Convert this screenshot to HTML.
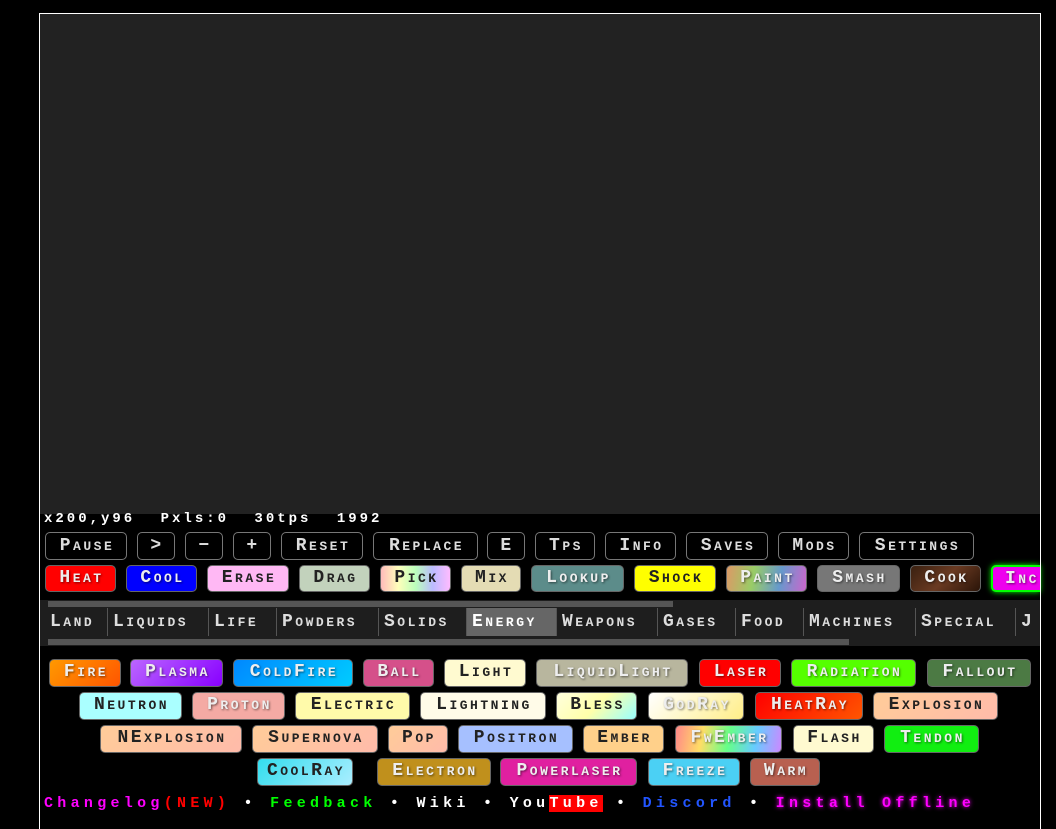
<!DOCTYPE html><html><head><style>
body{margin:0;background:#000;width:1056px;height:822px;overflow:hidden;position:relative;font-family:"Liberation Mono",monospace;}
#frame{position:absolute;left:39px;top:13px;width:1000px;height:815px;border:1px solid #fff;border-bottom:none;z-index:5}
#cv{position:absolute;left:40px;top:14px;width:1000px;height:500px;background:#222}
.b{position:absolute;height:26px;box-sizing:border-box;border:1px solid #666;border-radius:5px;font-weight:bold;font-variant:small-caps;font-size:18px;line-height:24px;text-align:center;color:#ddd;white-space:nowrap;overflow:hidden;letter-spacing:2.5px;text-indent:2px}
.c{background:#000;border-color:#777;height:28px;line-height:26px}
.e{color:#eee;text-shadow:1px 1px 2px #0008}
.d{color:#222;text-shadow:none}
.t{position:absolute;top:608px;height:28px;line-height:28px;font-weight:bold;font-variant:small-caps;font-size:18px;color:#ddd;text-align:left;padding-left:5px;letter-spacing:2.5px;border-right:1px solid #555;box-sizing:border-box;white-space:nowrap;overflow:hidden}
.sb{position:absolute;left:40px;width:1000px;height:8px;background:#1e1e1e}
.th{position:absolute;top:1px;height:6px;background:#555}
#stat{position:absolute;left:44px;top:511px;color:#fff;font-weight:bold;font-size:14px;letter-spacing:3px;word-spacing:14px}
#foot{position:absolute;left:44px;top:795px;font-weight:bold;font-size:15px;white-space:pre;color:#fff;letter-spacing:4.3px}
</style></head><body>
<div id="frame"></div><div id="cv"></div>
<div id="stat">x200,y96 Pxls:0 30tps 1992</div>
<div class="b c" style="left:45px;top:532px;width:82px">Pause</div>
<div class="b c" style="left:137px;top:532px;width:38px">&gt;</div>
<div class="b c" style="left:185px;top:532px;width:38px">−</div>
<div class="b c" style="left:233px;top:532px;width:38px">+</div>
<div class="b c" style="left:281px;top:532px;width:82px">Reset</div>
<div class="b c" style="left:373px;top:532px;width:105px">Replace</div>
<div class="b c" style="left:487px;top:532px;width:38px">E</div>
<div class="b c" style="left:535px;top:532px;width:60px">Tps</div>
<div class="b c" style="left:605px;top:532px;width:71px">Info</div>
<div class="b c" style="left:686px;top:532px;width:82px">Saves</div>
<div class="b c" style="left:778px;top:532px;width:71px">Mods</div>
<div class="b c" style="left:859px;top:532px;width:115px">Settings</div>

<div class="b e" style="left:45px;top:565px;width:71px;height:27px;background:#f00">Heat</div>
<div class="b e" style="left:126px;top:565px;width:71px;height:27px;background:#00f">Cool</div>
<div class="b d" style="left:207px;top:565px;width:82px;height:27px;background:#ffb8f4">Erase</div>
<div class="b d" style="left:299px;top:565px;width:71px;height:27px;background:#c2d2bc">Drag</div>
<div class="b d" style="left:380px;top:565px;width:71px;height:27px;background:linear-gradient(90deg,#fbb,#ffb,#bfb,#bbf,#fbf)">Pick</div>
<div class="b d" style="left:461px;top:565px;width:60px;height:27px;background:#e4dcb4">Mix</div>
<div class="b e" style="left:531px;top:565px;width:93px;height:27px;background:#5c8c8a">Lookup</div>
<div class="b d" style="left:634px;top:565px;width:82px;height:27px;background:#ff0">Shock</div>
<div class="b e" style="left:726px;top:565px;width:81px;height:27px;background:linear-gradient(100deg,#d96,#9c6,#69c,#c6c)">Paint</div>
<div class="b e" style="left:817px;top:565px;width:83px;height:27px;background:#777">Smash</div>
<div class="b e" style="left:910px;top:565px;width:71px;height:27px;background:linear-gradient(135deg,#3a2010,#6a3a22,#2a1408)">Cook</div>
<div class="b e" style="left:991px;top:565px;width:49px;height:27px;background:#e0e;border:2px solid #0f0;border-right:none;border-radius:5px 0 0 5px;box-shadow:0 0 6px #0f0;text-align:left;padding-left:10px">Inc</div>

<div class="sb" style="top:600px"><div class="th" style="left:8px;width:625px"></div></div>
<div style="position:absolute;left:40px;top:608px;width:1000px;height:30px;background:#1e1e1e"></div>
<div class="t" style="left:45px;width:63px">Land</div>
<div class="t" style="left:108px;width:101px">Liquids</div>
<div class="t" style="left:209px;width:68px">Life</div>
<div class="t" style="left:277px;width:102px">Powders</div>
<div class="t" style="left:379px;width:88px">Solids</div>
<div class="t" style="left:467px;width:90px;background:#666;color:#fff">Energy</div>
<div class="t" style="left:557px;width:101px">Weapons</div>
<div class="t" style="left:658px;width:78px">Gases</div>
<div class="t" style="left:736px;width:68px">Food</div>
<div class="t" style="left:804px;width:112px">Machines</div>
<div class="t" style="left:916px;width:100px">Special</div>
<div class="t" style="left:1016px;width:24px;border:none">J</div>
<div class="sb" style="top:638px"><div class="th" style="left:8px;width:801px"></div></div>

<div class="b e" style="left:49px;top:659px;width:72px;height:28px;background:linear-gradient(135deg,#f90,#f50)">Fire</div>
<div class="b e" style="left:130px;top:659px;width:93px;height:28px;background:linear-gradient(135deg,#b6f,#80f)">Plasma</div>
<div class="b e" style="left:233px;top:659px;width:120px;height:28px;background:linear-gradient(135deg,#08f,#0cf)">ColdFire</div>
<div class="b e" style="left:363px;top:659px;width:71px;height:28px;background:#d5508a">Ball</div>
<div class="b d" style="left:444px;top:659px;width:82px;height:28px;background:#fffad0">Light</div>
<div class="b e" style="left:536px;top:659px;width:152px;height:28px;background:#b8b69e">LiquidLight</div>
<div class="b e" style="left:699px;top:659px;width:82px;height:28px;background:#f00">Laser</div>
<div class="b e" style="left:791px;top:659px;width:125px;height:28px;background:#5f0">Radiation</div>
<div class="b e" style="left:927px;top:659px;width:104px;height:28px;background:#4c7a44">Fallout</div>

<div class="b d" style="left:79px;top:692px;width:103px;height:28px;background:#aff">Neutron</div>
<div class="b e" style="left:192px;top:692px;width:93px;height:28px;background:#f4aaa4">Proton</div>
<div class="b d" style="left:295px;top:692px;width:115px;height:28px;background:#fffaaa">Electric</div>
<div class="b d" style="left:420px;top:692px;width:126px;height:28px;background:#fffbe8">Lightning</div>
<div class="b d" style="left:556px;top:692px;width:81px;height:28px;background:linear-gradient(135deg,#ffd,#ffa,#9ff)">Bless</div>
<div class="b e" style="left:648px;top:692px;width:96px;height:28px;background:linear-gradient(135deg,#fff,#fe8)">GodRay</div>
<div class="b e" style="left:755px;top:692px;width:108px;height:28px;background:linear-gradient(135deg,#f00,#f50)">HeatRay</div>
<div class="b d" style="left:873px;top:692px;width:125px;height:28px;background:linear-gradient(135deg,#fc9,#fba)">Explosion</div>

<div class="b d" style="left:100px;top:725px;width:142px;height:28px;background:linear-gradient(135deg,#fc9,#fba)">NExplosion</div>
<div class="b d" style="left:252px;top:725px;width:126px;height:28px;background:linear-gradient(135deg,#fc9,#fba)">Supernova</div>
<div class="b d" style="left:388px;top:725px;width:60px;height:28px;background:linear-gradient(135deg,#fc9,#fba)">Pop</div>
<div class="b d" style="left:458px;top:725px;width:115px;height:28px;background:#a6c0ff">Positron</div>
<div class="b d" style="left:583px;top:725px;width:81px;height:28px;background:#ffd08a">Ember</div>
<div class="b e" style="left:675px;top:725px;width:107px;height:28px;background:linear-gradient(100deg,#f88,#fd6,#6f8,#6cf,#c8f)">FwEmber</div>
<div class="b d" style="left:793px;top:725px;width:81px;height:28px;background:#fffad0">Flash</div>
<div class="b e" style="left:884px;top:725px;width:95px;height:28px;background:#1e1">Tendon</div>

<div class="b d" style="left:257px;top:758px;width:96px;height:28px;background:linear-gradient(135deg,#3de,#aef)">CoolRay</div>
<div class="b e" style="left:377px;top:758px;width:114px;height:28px;background:#c0901c">Electron</div>
<div class="b e" style="left:500px;top:758px;width:137px;height:28px;background:#e020a0">Powerlaser</div>
<div class="b e" style="left:648px;top:758px;width:92px;height:28px;background:#4bd0f4">Freeze</div>
<div class="b e" style="left:750px;top:758px;width:70px;height:28px;background:#b86050">Warm</div>

<div id="foot"><span style="color:#f0f">Changelog</span><span style="color:#f00">(NEW)</span> • <span style="color:#0f0">Feedback</span> • Wiki • You<span style="background:#f00">Tube</span> • <span style="color:#25f">Discord</span> • <span style="color:#f0f;text-shadow:0 0 4px #f0f">Install Offline</span></div>
</body></html>
